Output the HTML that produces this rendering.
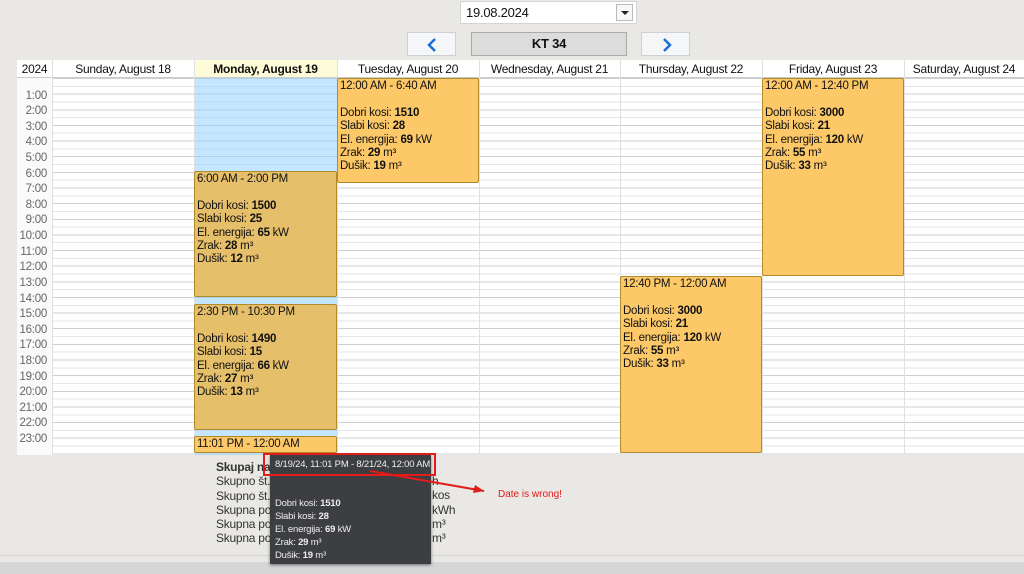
<!DOCTYPE html><html><head><style>
body{margin:0;width:1024px;height:574px;background:#e9e8e4;font-family:"Liberation Sans Narrow","Liberation Sans",sans-serif;font-size:12px;letter-spacing:-0.25px;color:#111;position:relative;overflow:hidden}
.a{position:absolute}
.btn{background:#f5f6f8;border:1px solid #d0d0d0;box-sizing:border-box}
.hdr{top:60px;height:18px;background:#fff;line-height:18px;text-align:center}
.grid{left:52px;top:78px;width:972px;height:377px;background-color:#fff;
background-image:repeating-linear-gradient(to bottom,#cfcfcf 0,#cfcfcf 1px,transparent 1px,transparent 7.82px,#e6e6e6 7.82px,#e6e6e6 8.82px,transparent 8.82px,transparent 15.64px)}
.vl{top:60px;width:1px;height:395px;background:#e0e0e0}
.hr{left:17px;width:35px;text-align:right;padding-right:5px;box-sizing:border-box;color:#666;line-height:14px;font-size:11.5px}
.ev{background:#fdc868;border:1px solid #b38a2a;border-radius:2px;box-sizing:border-box;padding:1px 2px 0;line-height:13.4px;overflow:hidden;font-size:11.5px}
.ev.d{background:#e6bf6a}
.sum{left:216px;color:#333;line-height:14.3px}
</style></head><body>
<div class="a" style="left:460px;top:1px;width:177px;height:23px;background:#fff;border:1px solid #d4d4d4;box-sizing:border-box;line-height:21px;padding-left:5px;font-size:13px">19.08.2024
<div class="a" style="right:3px;top:2px;width:17px;height:17px;border:1px solid #bbb;box-sizing:border-box;background:#f8f8f8"><div class="a" style="left:4px;top:6px;border:4px solid transparent;border-top:4px solid #222;border-bottom:0"></div></div></div>
<div class="a btn" style="left:407px;top:32px;width:49px;height:24px"><svg class="a" style="left:18px;top:5px" width="12" height="14"><path d="M9 1L3 7l6 6" stroke="#1a6fd6" stroke-width="2.5" fill="none"/></svg></div>
<div class="a" style="left:471px;top:32px;width:156px;height:24px;background:#dcdcdc;border:1px solid #aaa;box-sizing:border-box;text-align:center;line-height:22px;font-weight:bold;font-size:13px">KT 34</div>
<div class="a btn" style="left:641px;top:32px;width:49px;height:24px"><svg class="a" style="left:19px;top:5px" width="12" height="14"><path d="M3 1l6 6-6 6" stroke="#1a6fd6" stroke-width="2.5" fill="none"/></svg></div>

<div class="a hdr" style="left:17px;width:35px">2024</div>
<div class="a hdr" style="left:52px;width:142px">Sunday, August 18</div>
<div class="a hdr" style="left:194px;width:143px;background:#fdfbd8;font-weight:bold">Monday, August 19</div>
<div class="a hdr" style="left:337px;width:142px">Tuesday, August 20</div>
<div class="a hdr" style="left:479px;width:141px">Wednesday, August 21</div>
<div class="a hdr" style="left:620px;width:142px">Thursday, August 22</div>
<div class="a hdr" style="left:762px;width:142px">Friday, August 23</div>
<div class="a hdr" style="left:904px;width:120px">Saturday, August 24</div>
<div class="a" style="left:17px;top:78px;width:35px;height:377px;background:#fafafa"></div>
<div class="a grid"></div>
<div class="a" style="left:194px;top:78px;width:143px;height:377px;background:rgba(150,210,255,.55)"></div>
<div class="a" style="left:17px;top:77px;width:1007px;height:1px;background:#ccc"></div>
<div class="a vl" style="left:52px"></div><div class="a vl" style="left:194px"></div><div class="a vl" style="left:337px"></div><div class="a vl" style="left:479px"></div><div class="a vl" style="left:620px"></div><div class="a vl" style="left:762px"></div><div class="a vl" style="left:904px"></div>

<div class="a hr" style="top:89px">1:00</div><div class="a hr" style="top:104px">2:00</div><div class="a hr" style="top:120px">3:00</div><div class="a hr" style="top:135px">4:00</div><div class="a hr" style="top:151px">5:00</div><div class="a hr" style="top:167px">6:00</div><div class="a hr" style="top:182px">7:00</div><div class="a hr" style="top:198px">8:00</div><div class="a hr" style="top:213px">9:00</div><div class="a hr" style="top:229px">10:00</div><div class="a hr" style="top:245px">11:00</div><div class="a hr" style="top:260px">12:00</div><div class="a hr" style="top:276px">13:00</div><div class="a hr" style="top:292px">14:00</div><div class="a hr" style="top:307px">15:00</div><div class="a hr" style="top:323px">16:00</div><div class="a hr" style="top:338px">17:00</div><div class="a hr" style="top:354px">18:00</div><div class="a hr" style="top:370px">19:00</div><div class="a hr" style="top:385px">20:00</div><div class="a hr" style="top:401px">21:00</div><div class="a hr" style="top:416px">22:00</div><div class="a hr" style="top:432px">23:00</div>

<div class="a ev" style="left:337px;top:78px;width:142px;height:105px">12:00 AM - 6:40 AM<br><br>Dobri kosi: <b>1510</b><br>Slabi kosi: <b>28</b><br>El. energija: <b>69</b> kW<br>Zrak: <b>29</b> m³<br>Dušik: <b>19</b> m³</div>
<div class="a ev d" style="left:194px;top:171px;width:143px;height:126px">6:00 AM - 2:00 PM<br><br>Dobri kosi: <b>1500</b><br>Slabi kosi: <b>25</b><br>El. energija: <b>65</b> kW<br>Zrak: <b>28</b> m³<br>Dušik: <b>12</b> m³</div>
<div class="a ev d" style="left:194px;top:304px;width:143px;height:126px">2:30 PM - 10:30 PM<br><br>Dobri kosi: <b>1490</b><br>Slabi kosi: <b>15</b><br>El. energija: <b>66</b> kW<br>Zrak: <b>27</b> m³<br>Dušik: <b>13</b> m³</div>
<div class="a ev" style="left:194px;top:436px;width:143px;height:17px">11:01 PM - 12:00 AM</div>
<div class="a ev" style="left:620px;top:276px;width:142px;height:177px">12:40 PM - 12:00 AM<br><br>Dobri kosi: <b>3000</b><br>Slabi kosi: <b>21</b><br>El. energija: <b>120</b> kW<br>Zrak: <b>55</b> m³<br>Dušik: <b>33</b> m³</div>
<div class="a ev" style="left:762px;top:78px;width:142px;height:198px">12:00 AM - 12:40 PM<br><br>Dobri kosi: <b>3000</b><br>Slabi kosi: <b>21</b><br>El. energija: <b>120</b> kW<br>Zrak: <b>55</b> m³<br>Dušik: <b>33</b> m³</div>

<div class="a sum" style="top:460px"><b>Skupaj napr</b><br>Skupno št. d<br>Skupno št. i<br>Skupna pora<br>Skupna pora<br>Skupna pora</div>
<div class="a sum" style="left:432px;top:474px">h<br>kos<br>kWh<br>m³<br>m³</div>
<div class="a" style="left:0;top:555px;width:1024px;height:1px;background:#d4d4d4"></div>
<div class="a" style="left:0;top:562px;width:1024px;height:12px;background:#d6d6d6"></div>
<div class="a" style="left:270px;top:455px;width:161px;height:109px;background:#3d3e41;color:#eee;font-size:9.5px;letter-spacing:-0.2px;box-shadow:0 1px 3px rgba(0,0,0,.5)">
<div class="a" style="left:5px;top:4px;white-space:nowrap">8/19/24, 11:01 PM - 8/21/24, 12:00 AM</div>
<div class="a" style="left:5px;top:42px;line-height:13px">Dobri kosi: <b>1510</b><br>Slabi kosi: <b>28</b><br>El. energija: <b>69</b> kW<br>Zrak: <b>29</b> m³<br>Dušik: <b>19</b> m³</div></div>
<div class="a" style="left:263px;top:453px;width:173px;height:23px;border:2px solid #e31b1b;box-sizing:border-box"></div>
<svg class="a" style="left:0;top:0" width="1024" height="574"><path d="M370 471L484 491" stroke="#e31b1b" stroke-width="2"/><path d="M484 491l-9-6 -2 8z" fill="#e31b1b"/></svg>
<div class="a" style="left:498px;top:489px;color:#e31b1b;font-size:10px;letter-spacing:0">Date is wrong!</div>
</body></html>
